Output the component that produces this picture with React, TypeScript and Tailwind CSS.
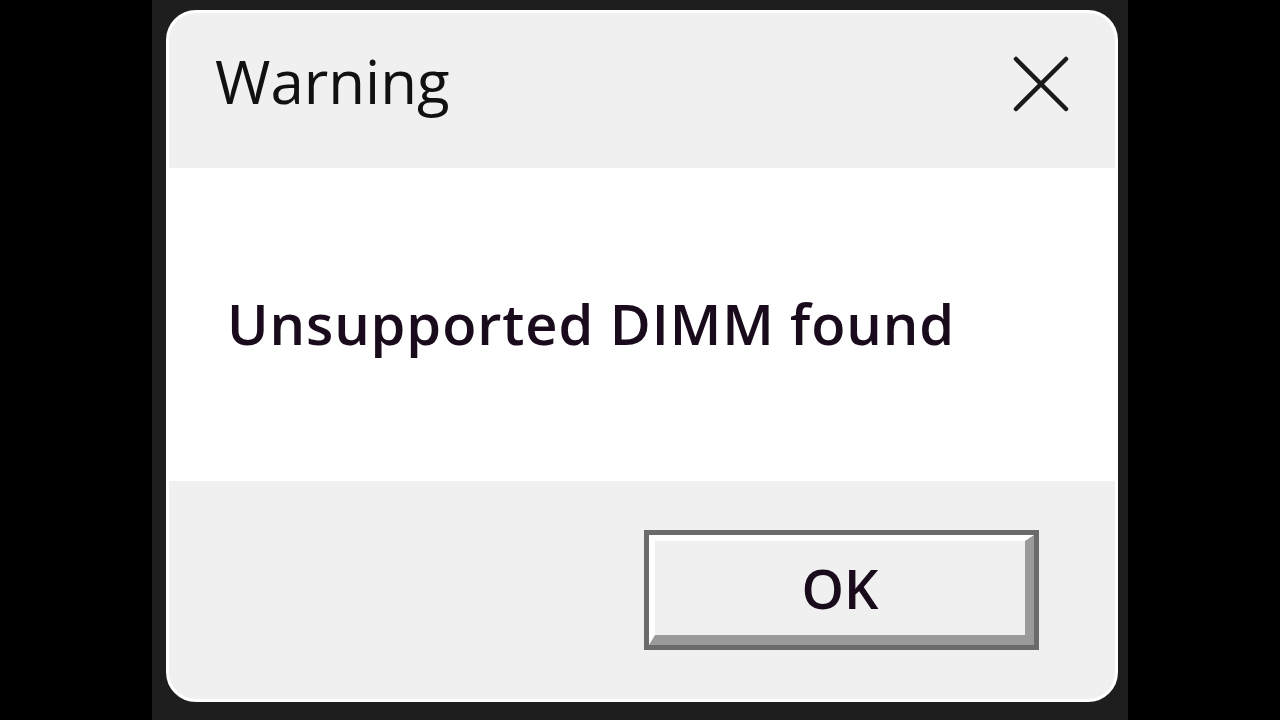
export default function App() {
  return (
    <div className="flex h-[720px] w-[1280px] justify-center bg-black">
      <div className="flex w-[976px] bg-[#1e1e1e] pb-[18px] pl-[14px] pr-[10px] pt-[10px]">
        {/* Dialog */}
        <div
          className="flex flex-1 flex-col overflow-hidden rounded-[30px] border-[3px] border-white bg-[#f0f0f0] text-black"
          style={{ fontFamily: '"Open Sans", "Noto Sans", sans-serif' }}
        >
          {/* Title bar */}
          <div className="flex h-[155px] items-start justify-between">
            <span className="ml-[46px] mt-[28px] text-[60px] font-medium leading-[80px] text-[#111]">Warning</span>
            <button className="mr-[44px] mt-[41px] flex h-[60px] w-[60px] items-center justify-center">
              <svg width="56" height="56" viewBox="0 0 56 56" fill="none">
                <path d="M3 3L53 53M53 3L3 53" stroke="#1a1a1a" strokeWidth="4.5" strokeLinecap="round" />
              </svg>
            </button>
          </div>

          {/* Message */}
          <div className="flex h-[313px] items-center bg-white pl-[58px]">
            <span className="mt-[-4px] text-[56px] font-semibold leading-[80px] tracking-[0.9px] text-[#1a0b1c]">
              Unsupported DIMM found
            </span>
          </div>

          {/* Footer */}
          <div className="flex flex-1 items-start justify-end pr-[76px] pt-[49px]">
            <button className="h-[120px] w-[395px] border-[5px] border-[#6b6b6b] bg-[#f0f0f0]">
              <div className="flex h-full w-full items-center justify-center border-b-[10px] border-l-[6px] border-r-[9px] border-t-[6px] border-b-[#9a9a9a] border-l-white border-r-[#9a9a9a] border-t-white">
                <span className="text-[54px] font-semibold leading-[60px] text-[#1a0b1c]">OK</span>
              </div>
            </button>
          </div>
        </div>
      </div>
    </div>
  );
}
